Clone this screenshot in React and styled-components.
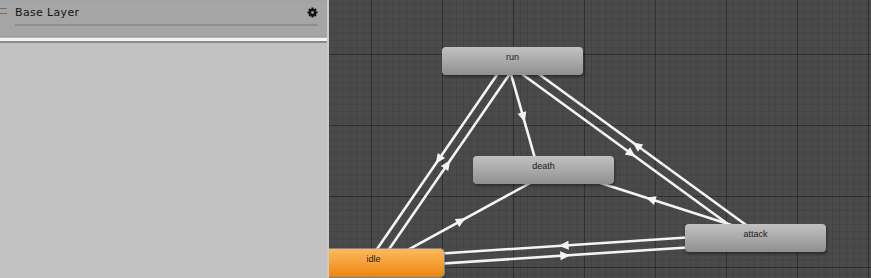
import React from 'react';
import styled, { createGlobalStyle } from 'styled-components';

const Global = createGlobalStyle`
  html, body { margin: 0; padding: 0; width: 871px; height: 278px; overflow: hidden; background: #4a4a4a; }
  #root { width: 871px; height: 278px; }
`;

const Window = styled.div`
  display: flex;
  width: 871px;
  height: 278px;
  overflow: hidden;
  font-family: "DejaVu Sans", sans-serif;
`;

const Sidebar = styled.aside`
  width: 327px;
  flex: none;
  display: flex;
  flex-direction: column;
  background: #c2c2c2;
  border-right: 2px solid #cbcbcb;
  position: relative;
  z-index: 2;
`;

const LayerItem = styled.div`
  height: 36px;
  display: flex;
  flex-direction: column;
  background: linear-gradient(#9fa5a8 0px, #a6a6a6 5px, #a5a5a5 100%);
`;

const TitleRow = styled.div`
  display: flex;
  align-items: center;
  height: 24px;
  padding-right: 9px;
`;

const Handle = styled.div`
  width: 7px;
  height: 4px;
  margin: -2px 8px 0 0;
  flex: none;
  border-top: 1px solid #6e6e6e;
  border-bottom: 1px solid #6e6e6e;
`;

const LayerName = styled.span`
  flex: 1;
  font-size: 11px;
  letter-spacing: 0.35px;
  color: #151515;
`;

const Divider = styled.div`
  height: 2px;
  margin: 0 9px 0 15px;
  background: #8f8f8f;
`;

const Band = styled.div`
  height: 7px;
  background: linear-gradient(#9c9c9c 0 1px, #b4b4b4 1px 2px, #f3f3f3 2px 5px, #8b8b8b 5px 7px);
`;

const Canvas = styled.main`
  flex: 1;
  position: relative;
  overflow: hidden;
  background-color: #4a4a4a;
  background-image:
    linear-gradient(to right, rgba(0,0,0,0.3) 1px, transparent 1px),
    linear-gradient(to bottom, rgba(0,0,0,0.3) 1px, transparent 1px),
    linear-gradient(to right, rgba(0,0,0,0.09) 1px, transparent 1px),
    linear-gradient(to bottom, rgba(0,0,0,0.09) 1px, transparent 1px);
  background-size: 71px 71px, 71px 71px, 7.1px 7.1px, 7.1px 7.1px;
  background-position: 42px 54px, 42px 54px, 42px 54px, 42px 54px;
`;

const Wires = styled.svg`
  position: absolute;
  left: 0;
  top: 0;
  width: 100%;
  height: 100%;
`;

const StateNode = styled.div`
  position: absolute;
  left: ${p => p.$x}px;
  top: ${p => p.$y}px;
  width: 141px;
  height: 28px;
  box-sizing: border-box;
  padding-top: 5px;
  border-radius: 4px;
  text-align: center;
  font-family: "Liberation Sans", Arial, sans-serif;
  font-size: 9px;
  line-height: 10px;
  color: #1c1c1c;
  background: ${p => (p.$default
    ? 'linear-gradient(#fdb85c, #f5a136 50%, #ec840f)'
    : 'linear-gradient(#c1c1c1, #a9a9a9 50%, #8f8f8f)')};
  box-shadow: ${p => (p.$default
    ? '0 0 0 1px rgba(120,170,215,0.7), 1px 2px 3px rgba(0,0,0,0.35)'
    : '1px 2px 3px rgba(0,0,0,0.4)')};
`;

const Gear = () => (
  <svg width="11" height="11" viewBox="0 0 20 20">
    {[0, 45, 90, 135].map(a => (
      <rect key={a} x="8" y="1" width="4" height="18" fill="#111" transform={`rotate(${a} 10 10)`} />
    ))}
    <circle cx="10" cy="10" r="6.5" fill="#111" />
    <circle cx="10" cy="10" r="2.6" fill="#9a9a9a" />
  </svg>
);

const NODE_W = 141;
const NODE_H = 28;

const nodes = {
  run: { x: 113, y: 47, label: 'run' },
  death: { x: 144, y: 156, label: 'death' },
  idle: { x: -26, y: 249, label: 'idle', isDefault: true },
  attack: { x: 356, y: 224, label: 'attack' },
};

const transitions = [
  ['run', 'idle'],
  ['idle', 'run'],
  ['run', 'death'],
  ['run', 'attack'],
  ['attack', 'run'],
  ['idle', 'death'],
  ['attack', 'death'],
  ['idle', 'attack'],
  ['attack', 'idle'],
];

const center = k => ({ x: nodes[k].x + NODE_W / 2, y: nodes[k].y + NODE_H / 2 });

function geometry(a, b) {
  const p = center(a);
  const q = center(b);
  const dx = q.x - p.x;
  const dy = q.y - p.y;
  const len = Math.hypot(dx, dy);
  const d = { x: dx / len, y: dy / len };
  const n = { x: -d.y, y: d.x };
  const off = 5;
  const p1 = { x: p.x + n.x * off, y: p.y + n.y * off };
  const q1 = { x: q.x + n.x * off, y: q.y + n.y * off };
  const m = { x: (p1.x + q1.x) / 2, y: (p1.y + q1.y) / 2 };
  const tip = { x: m.x + d.x * 5.5, y: m.y + d.y * 5.5 };
  const b1 = { x: m.x - d.x * 4.5 + n.x * 4.5, y: m.y - d.y * 4.5 + n.y * 4.5 };
  const b2 = { x: m.x - d.x * 4.5 - n.x * 4.5, y: m.y - d.y * 4.5 - n.y * 4.5 };
  return { p1, q1, arrow: `${tip.x},${tip.y} ${b1.x},${b1.y} ${b2.x},${b2.y}` };
}

export default function App() {
  return (
    <Window>
      <Global />
      <Sidebar>
        <LayerItem>
          <TitleRow>
            <Handle />
            <LayerName>Base Layer</LayerName>
            <Gear />
          </TitleRow>
          <Divider />
        </LayerItem>
        <Band />
      </Sidebar>
      <Canvas>
        <Wires>
          {transitions.map(([a, b]) => {
            const g = geometry(a, b);
            return (
              <g key={a + b}>
                <line x1={g.p1.x} y1={g.p1.y} x2={g.q1.x} y2={g.q1.y} stroke="#f4f4f4" strokeWidth="2.6" />
                <polygon points={g.arrow} fill="#f4f4f4" />
              </g>
            );
          })}
        </Wires>
        {Object.entries(nodes).map(([k, n]) => (
          <StateNode key={k} $x={n.x} $y={n.y} $default={n.isDefault}>
            {n.label}
          </StateNode>
        ))}
      </Canvas>
    </Window>
  );
}
